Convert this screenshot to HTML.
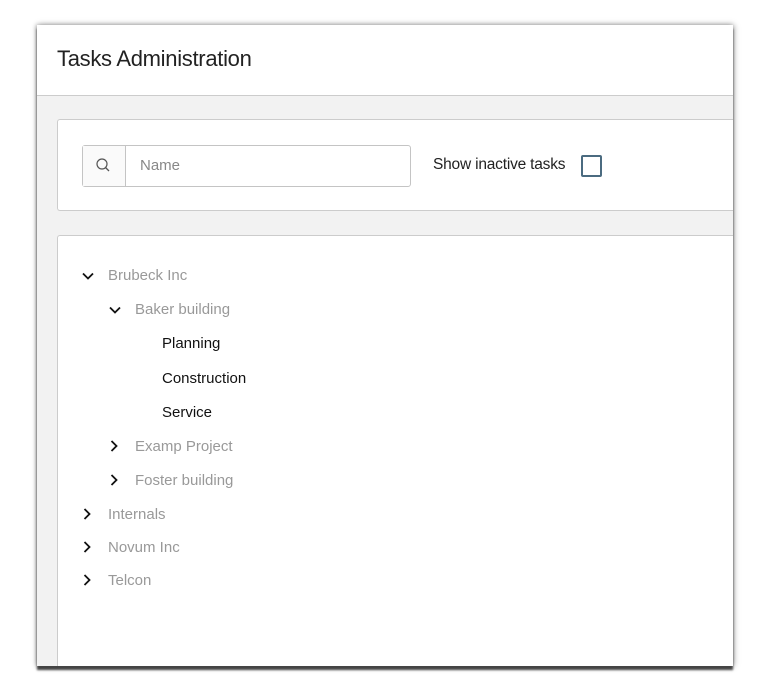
<!DOCTYPE html>
<html><head><style>
body{margin:0;width:768px;height:691px;background:#fff;position:relative;overflow:hidden;font-family:"Liberation Sans",Arial,sans-serif}
.win{position:absolute;left:37px;top:25px;width:696px;height:641px;background:#f2f2f2;box-shadow:0 4px 2px #444,1px 0 6px rgba(0,0,0,.35),-1px 0 4px rgba(0,0,0,.25);overflow:hidden}
.hdr{position:absolute;left:0;top:0;width:696px;height:70px;background:#fff;border-bottom:1px solid #ccc}
.hdr span{position:absolute;left:20px;top:21px;font-size:22px;color:#222;letter-spacing:-0.3px}
.card{position:absolute;left:20px;background:#fff;border:1px solid #ccc;border-right:none;border-radius:3px 0 0 3px;width:700px}
.inp{position:absolute;left:24px;top:25px;width:327px;height:40px;border:1px solid #c4c4c4;border-radius:3px;background:#fff}
.inp .ic{position:absolute;left:0;top:0;width:42px;height:40px;border-right:1px solid #c4c4c4;background:#fafafa}
.inp .ph{position:absolute;left:57px;top:11px;font-size:15px;color:#888}
.lbl{position:absolute;left:375px;top:36px;font-size:15.5px;color:#222;letter-spacing:-0.2px}
.cb{position:absolute;left:523px;top:35px;width:17px;height:18px;border:2px solid #4b6b80;border-radius:2px}
.r{position:absolute;font-size:15px;line-height:16px}
.g{color:#999}.k{color:#111}
svg.ch{position:absolute}
</style></head><body>
<div class="win">
<div class="hdr"><span>Tasks Administration</span></div>
<div class="card" style="top:94px;height:90px">
<div class="inp"><div class="ic"><svg width="42" height="40"><circle cx="19" cy="18" r="5" fill="none" stroke="#555" stroke-width="1.2"/><path d="M22.5 21.5L26 25" stroke="#555" stroke-width="1.3"/></svg></div><div class="ph">Name</div></div>
<div class="lbl">Show inactive tasks</div><div class="cb"></div>
</div>
<div class="card" style="top:210px;height:440px">
<svg class="ch" style="left:23px;top:33px" width="14" height="14"><path d="M2 4.5L7 9.5L12 4.5" fill="none" stroke="#111" stroke-width="1.8"/></svg>
<div class="r g" style="left:50px;top:32px">Brubeck Inc</div>
<svg class="ch" style="left:50px;top:67px" width="14" height="14"><path d="M2 4.5L7 9.5L12 4.5" fill="none" stroke="#111" stroke-width="1.8"/></svg>
<div class="r g" style="left:77px;top:66px">Baker building</div>
<div class="r k" style="left:104px;top:100px">Planning</div>
<div class="r k" style="left:104px;top:135px">Construction</div>
<div class="r k" style="left:104px;top:169px">Service</div>
<svg class="ch" style="left:49px;top:203px" width="14" height="14"><path d="M4.5 2L9.5 7L4.5 12" fill="none" stroke="#111" stroke-width="1.8"/></svg>
<div class="r g" style="left:77px;top:203px">Examp Project</div>
<svg class="ch" style="left:49px;top:237px" width="14" height="14"><path d="M4.5 2L9.5 7L4.5 12" fill="none" stroke="#111" stroke-width="1.8"/></svg>
<div class="r g" style="left:77px;top:237px">Foster building</div>
<svg class="ch" style="left:22px;top:271px" width="14" height="14"><path d="M4.5 2L9.5 7L4.5 12" fill="none" stroke="#111" stroke-width="1.8"/></svg>
<div class="r g" style="left:50px;top:271px">Internals</div>
<svg class="ch" style="left:22px;top:304px" width="14" height="14"><path d="M4.5 2L9.5 7L4.5 12" fill="none" stroke="#111" stroke-width="1.8"/></svg>
<div class="r g" style="left:50px;top:304px">Novum Inc</div>
<svg class="ch" style="left:22px;top:337px" width="14" height="14"><path d="M4.5 2L9.5 7L4.5 12" fill="none" stroke="#111" stroke-width="1.8"/></svg>
<div class="r g" style="left:50px;top:337px">Telcon</div>
</div>
</div>
</body></html>
